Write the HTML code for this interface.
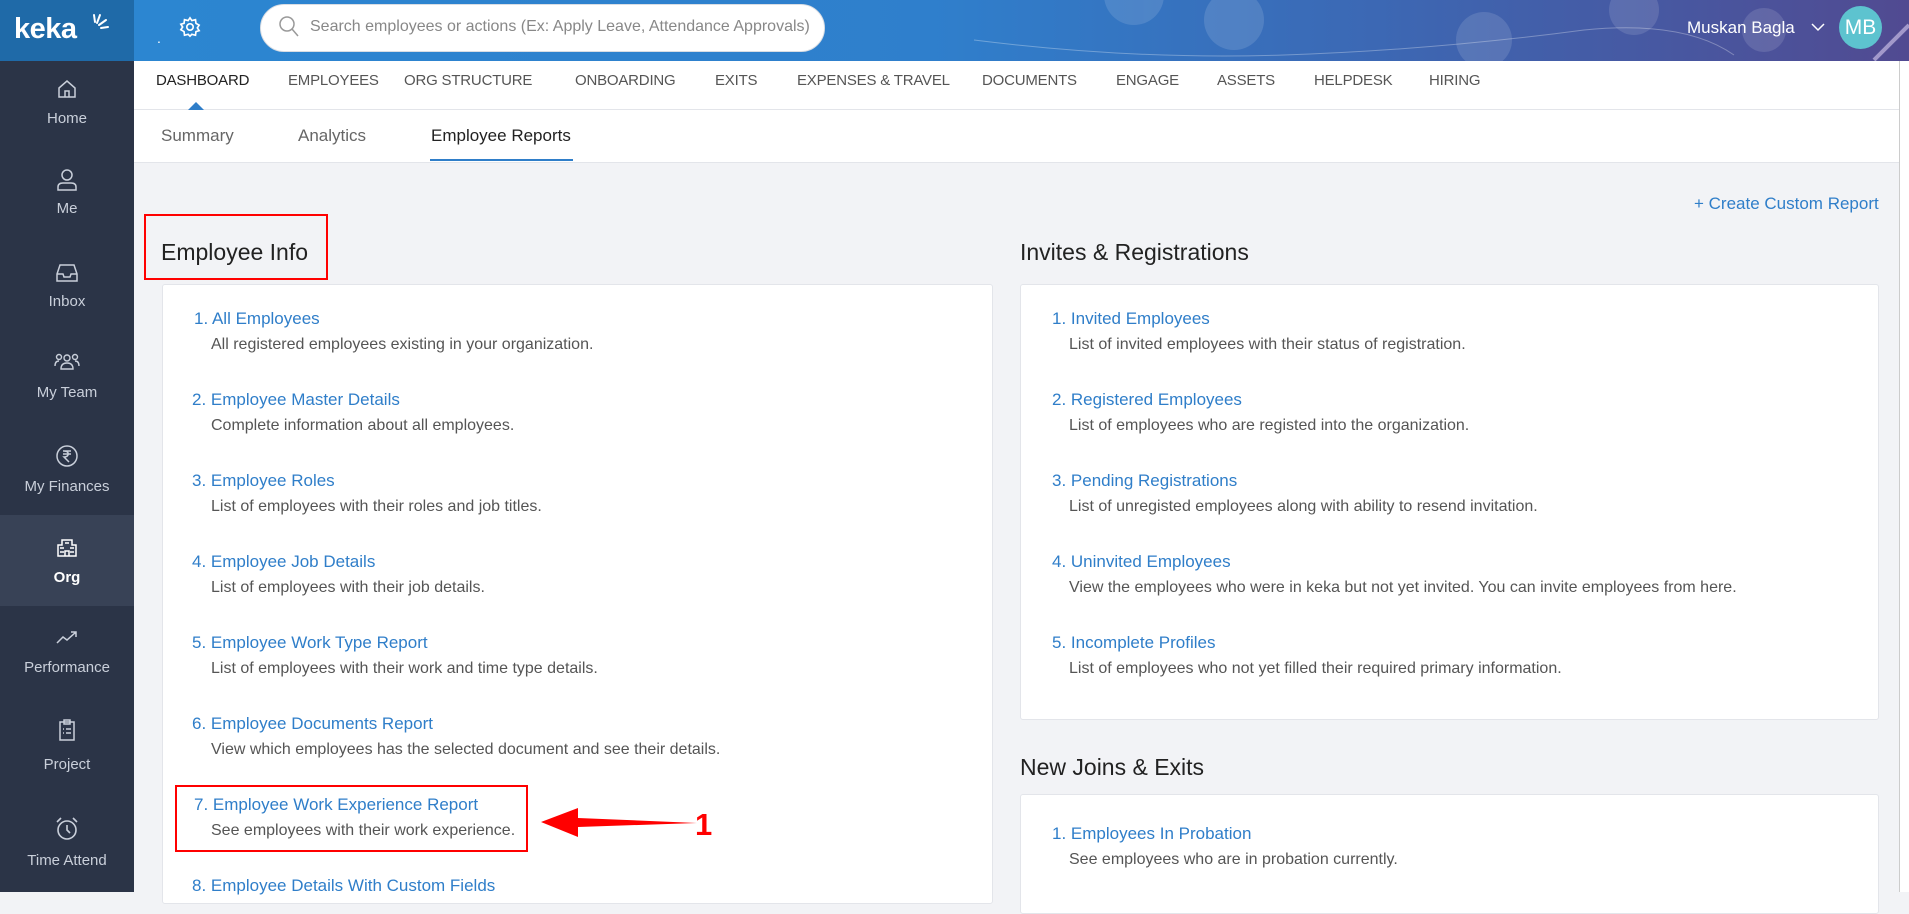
<!DOCTYPE html>
<html><head><meta charset="utf-8"><style>
*{margin:0;padding:0;box-sizing:border-box}
body{width:1909px;height:892px;overflow:hidden;background:#f2f3f6;font-family:"Liberation Sans",sans-serif;position:relative}
.abs{position:absolute}
#side{left:0;top:0;width:134px;height:892px;background:#2b3447}
#logo{left:0;top:0;width:134px;height:61px;background:#1f6aa8}
.si{position:absolute;left:0;width:134px;text-align:center;color:#c9cfda;font-size:15px}
.si svg{display:block;margin:0 auto}
#hdr{left:134px;top:0;width:1775px;height:61px;background:linear-gradient(90deg,#2c86d1 0%,#2f7fcc 45%,#3c68b4 70%,#514a91 100%)}
#nav{left:134px;top:61px;width:1765px;height:49px;background:#fff;border-bottom:1px solid #e3e5ea}
.n{position:absolute;top:72px;font-size:15px;color:#555;letter-spacing:-0.2px}
#sub{left:134px;top:110px;width:1765px;height:53px;background:#fff;border-bottom:1px solid #e3e5ea}
.t{position:absolute;top:126px;font-size:17px;color:#666}
.card{position:absolute;background:#fff;border:1px solid #e3e5ea;border-radius:3px}
.h{position:absolute;font-size:23px;color:#222}
.it{position:absolute;font-size:17px;color:#2f7ec9}
.ds{position:absolute;font-size:16px;color:#555}
</style></head><body>
<div id="side" class="abs"></div>
<div id="logo" class="abs"><div style="position:absolute;left:14px;top:13px;color:#fff;font-weight:bold;font-size:29px;letter-spacing:-0.5px">keka</div>
<svg class="abs" style="left:90px;top:12px" width="24" height="22"><g stroke="#fff" stroke-width="2" stroke-linecap="round"><line x1="4" y1="3" x2="5" y2="10"/><line x1="10" y1="3" x2="7" y2="11"/><line x1="16" y1="8" x2="9" y2="13"/><line x1="18" y1="15" x2="11" y2="16"/></g></svg></div>

<div class="si" style="top:78px"><svg width="22" height="22" viewBox="0 0 22 22" fill="none" stroke="#c9cfda" stroke-width="1.5"><path d="M3 10 L11 3 L19 10 V19 H3 Z M9 19 V13 H13 V19"/></svg><div style="margin-top:10px">Home</div></div>
<div class="si" style="top:168px"><svg width="22" height="24" viewBox="0 0 22 24" fill="none" stroke="#c9cfda" stroke-width="1.5"><circle cx="11" cy="7" r="5"/><path d="M2 22 V19 Q2 15 7 15 H15 Q20 15 20 19 V22 Z"/></svg><div style="margin-top:8px">Me</div></div>
<div class="si" style="top:262px"><svg width="24" height="22" viewBox="0 0 24 22" fill="none" stroke="#c9cfda" stroke-width="1.5"><path d="M5 3 H19 L22 12 V19 H2 V12 Z M2 12 H8 L9 15 H15 L16 12 H22"/></svg><div style="margin-top:9px">Inbox</div></div>
<div class="si" style="top:352px"><svg width="26" height="20" viewBox="0 0 26 20" fill="none" stroke="#c9cfda" stroke-width="1.4"><circle cx="13" cy="6" r="3"/><circle cx="5" cy="5" r="2.5"/><circle cx="21" cy="5" r="2.5"/><path d="M7 17 Q7 11 13 11 Q19 11 19 17 Z M1 14 Q1 9 5 9 M25 14 Q25 9 21 9"/></svg><div style="margin-top:12px">My Team</div></div>
<div class="si" style="top:444px"><svg width="24" height="24" viewBox="0 0 24 24" fill="none" stroke="#c9cfda" stroke-width="1.5"><circle cx="12" cy="12" r="10"/><path d="M8 7 H16 M8 10 H16 M9 7 Q14 7 13 11 Q12 13 9 13 L14 18"/></svg><div style="margin-top:10px">My Finances</div></div>
<div class="abs" style="left:0;top:515px;width:134px;height:91px;background:#384256"></div>
<div class="si" style="top:538px;color:#fff;font-weight:bold"><svg width="22" height="20" viewBox="0 0 22 20" fill="none" stroke="#fff" stroke-width="1.5"><path d="M2 18 V7 H6 V2 H16 V7 H20 V18 Z M9 5 H13 M4 10 H8 M14 10 H18 M4 14 H8 M14 14 H18 M9 18 V13 H13 V18"/></svg><div style="margin-top:11px">Org</div></div>
<div class="si" style="top:628px"><svg width="24" height="18" viewBox="0 0 24 18" fill="none" stroke="#c9cfda" stroke-width="1.5"><path d="M2 15 L8 9 L12 12 L21 4 M16 4 H21 V9"/></svg><div style="margin-top:13px">Performance</div></div>
<div class="si" style="top:718px"><svg width="20" height="24" viewBox="0 0 20 24" fill="none" stroke="#c9cfda" stroke-width="1.5"><path d="M3 4 H17 V22 H3 Z M7 2 H13 V6 H7 Z M6 11 H7 M9 11 H14 M6 15 H7 M9 15 H14"/></svg><div style="margin-top:14px">Project</div></div>
<div class="si" style="top:816px"><svg width="26" height="26" viewBox="0 0 26 26" fill="none" stroke="#c9cfda" stroke-width="1.6"><circle cx="13" cy="14" r="9"/><path d="M13 9 V14 L16 17 M3 6 L7 2 M23 6 L19 2"/></svg><div style="margin-top:10px">Time Attend</div></div>

<div id="hdr" class="abs">
<svg class="abs" style="left:0;top:0" width="1775" height="61"><g fill="#fff" opacity=".12"><circle cx="1100" cy="20" r="30"/><circle cx="1350" cy="40" r="28"/><circle cx="1500" cy="10" r="25"/><circle cx="1630" cy="30" r="22"/><circle cx="1000" cy="-5" r="30"/></g><path d="M840 40 Q1000 60 1150 55 Q1300 50 1450 30 Q1550 20 1600 55" stroke="#fff" stroke-opacity=".3" fill="none"/><path d="M1740 60 Q1760 40 1775 25" stroke="#d8cdf0" stroke-opacity=".6" stroke-width="4" fill="none"/></svg>
<div class="abs" style="left:23px;top:30px;color:#fff;font-size:14px">.</div>
<svg class="abs" style="left:45px;top:16px" width="22" height="22" viewBox="0 0 24 24" fill="none" stroke="#fff" stroke-width="1.8"><circle cx="12" cy="12" r="3.5"/><path d="M12 2 L14 5 L18 4 L18.5 8 L22 10 L20 13 L22 16 L18.5 17 L18 21 L14 20 L12 22 L10 20 L6 21 L5.5 17 L2 15 L4 12 L2 9 L5.5 8 L6 4 L10 5 Z"/></svg>
<div class="abs" style="left:126px;top:4px;width:565px;height:48px;background:#fff;border-radius:24px;border:1px solid #d9dde3"></div>
<svg class="abs" style="left:144px;top:15px" width="22" height="24" viewBox="0 0 22 24" fill="none" stroke="#999" stroke-width="1.5"><circle cx="9" cy="9" r="7"/><path d="M14 14 L20 21"/></svg>
<div class="abs" style="left:176px;top:18px;font-size:16px;color:#888">Search employees or actions (Ex: Apply Leave, Attendance Approvals)</div>
<div class="abs" style="left:1553px;top:18px;font-size:17px;color:#fff">Muskan Bagla</div>
<svg class="abs" style="left:1677px;top:22px" width="14" height="10"><path d="M1 2 L7 8 L13 2" stroke="#fff" stroke-width="1.5" fill="none"/></svg>
<div class="abs" style="left:1705px;top:6px;width:43px;height:43px;border-radius:50%;background:#5dc3cf;color:#fff;font-size:21px;text-align:center;line-height:43px">MB</div>
</div>

<div id="nav" class="abs"></div>
<div class="n" style="left:156px;color:#222">DASHBOARD</div>
<div class="n" style="left:288px">EMPLOYEES</div>
<div class="n" style="left:404px">ORG STRUCTURE</div>
<div class="n" style="left:575px">ONBOARDING</div>
<div class="n" style="left:715px">EXITS</div>
<div class="n" style="left:797px">EXPENSES &amp; TRAVEL</div>
<div class="n" style="left:982px">DOCUMENTS</div>
<div class="n" style="left:1116px">ENGAGE</div>
<div class="n" style="left:1217px">ASSETS</div>
<div class="n" style="left:1314px">HELPDESK</div>
<div class="n" style="left:1429px">HIRING</div>
<div class="abs" style="left:188px;top:102px;width:0;height:0;border-left:8px solid transparent;border-right:8px solid transparent;border-bottom:8px solid #2f7ec9"></div>

<div id="sub" class="abs"></div>
<div class="t" style="left:161px">Summary</div>
<div class="t" style="left:298px">Analytics</div>
<div class="t" style="left:431px;color:#222">Employee Reports</div>
<div class="abs" style="left:430px;top:159px;width:143px;height:2px;background:#2f7ec9"></div>
<div class="abs" style="left:1899px;top:61px;width:10px;height:831px;background:#fff;border-left:1px solid #ccc"></div>

<div class="abs" style="left:1694px;top:194px;font-size:17px;color:#2f7ec9">+ Create Custom Report</div>
<div class="h" style="left:161px;top:239px">Employee Info</div>
<div class="abs" style="left:144px;top:214px;width:184px;height:66px;border:2px solid #f00"></div>
<div class="h" style="left:1020px;top:239px">Invites &amp; Registrations</div>

<div class="card" style="left:162px;top:284px;width:831px;height:620px"></div>
<div class="card" style="left:1020px;top:284px;width:859px;height:436px"></div>
<div class="h" style="left:1020px;top:754px">New Joins &amp; Exits</div>
<div class="card" style="left:1020px;top:794px;width:859px;height:120px"></div>

<div class="it" style="left:194px;top:309px">1. All Employees</div><div class="ds" style="left:211px;top:336px">All registered employees existing in your organization.</div>
<div class="it" style="left:192px;top:390px">2. Employee Master Details</div><div class="ds" style="left:211px;top:417px">Complete information about all employees.</div>
<div class="it" style="left:192px;top:471px">3. Employee Roles</div><div class="ds" style="left:211px;top:498px">List of employees with their roles and job titles.</div>
<div class="it" style="left:192px;top:552px">4. Employee Job Details</div><div class="ds" style="left:211px;top:579px">List of employees with their job details.</div>
<div class="it" style="left:192px;top:633px">5. Employee Work Type Report</div><div class="ds" style="left:211px;top:660px">List of employees with their work and time type details.</div>
<div class="it" style="left:192px;top:714px">6. Employee Documents Report</div><div class="ds" style="left:211px;top:741px">View which employees has the selected document and see their details.</div>
<div class="it" style="left:194px;top:795px">7. Employee Work Experience Report</div><div class="ds" style="left:211px;top:822px">See employees with their work experience.</div>
<div class="it" style="left:192px;top:876px">8. Employee Details With Custom Fields</div>
<div class="abs" style="left:175px;top:785px;width:353px;height:67px;border:2px solid #f00"></div>
<svg class="abs" style="left:535px;top:800px" width="180" height="45"><path d="M6 22 L43 8 L43 18 L162 23 L43 27 L43 37 Z" fill="#f00"/><text x="160" y="35" font-family="Liberation Sans" font-weight="bold" font-size="31" fill="#f00">1</text></svg>

<div class="it" style="left:1052px;top:309px">1. Invited Employees</div><div class="ds" style="left:1069px;top:336px">List of invited employees with their status of registration.</div>
<div class="it" style="left:1052px;top:390px">2. Registered Employees</div><div class="ds" style="left:1069px;top:417px">List of employees who are registed into the organization.</div>
<div class="it" style="left:1052px;top:471px">3. Pending Registrations</div><div class="ds" style="left:1069px;top:498px">List of unregisted employees along with ability to resend invitation.</div>
<div class="it" style="left:1052px;top:552px">4. Uninvited Employees</div><div class="ds" style="left:1069px;top:579px">View the employees who were in keka but not yet invited. You can invite employees from here.</div>
<div class="it" style="left:1052px;top:633px">5. Incomplete Profiles</div><div class="ds" style="left:1069px;top:660px">List of employees who not yet filled their required primary information.</div>
<div class="it" style="left:1052px;top:824px">1. Employees In Probation</div><div class="ds" style="left:1069px;top:851px">See employees who are in probation currently.</div>
</body></html>
